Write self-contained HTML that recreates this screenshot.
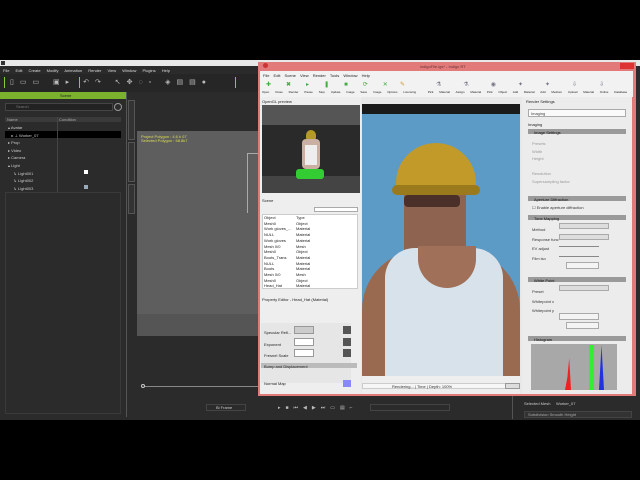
<!DOCTYPE html>
<html><head><style>
*{margin:0;padding:0;box-sizing:border-box}
body{width:640px;height:480px;background:#000;position:relative;overflow:hidden;font-family:"Liberation Sans",sans-serif;font-size:4px;color:#ccc}
div{position:absolute}
.t{white-space:nowrap}
</style></head><body>
<div style="left:0;top:60px;width:640px;height:6px;background:#e8e8e8"></div>
<div style="left:1px;top:61px;width:4px;height:4px;background:#333"></div>
<div style="left:0;top:66px;width:640px;height:354px;background:#2b2b2b"></div>
<div class="t" style="left:3px;top:68px;font-size:4px;color:#ddd;word-spacing:5px">File Edit Create Modify Animation Render View Window Plugins Help</div>
<div style="left:0;top:74px;width:260px;height:18px;background:#262626"></div>
<div style="left:4px;top:77px;width:1px;height:11px;background:#8c3"></div>
<div style="left:79px;top:77px;width:1px;height:11px;background:#8c3"></div>
<div style="left:235px;top:77px;width:1px;height:11px;background:#8c3"></div>
<div class="t" style="left:10px;top:78px;font-size:7px;color:#bbb;letter-spacing:6px">▯▭▭ ▣▸ ↶↷ ↖✥◌▫ ◈▤▤●</div>
<div style="left:0;top:92px;width:126px;height:7px;background:#7ab22e"></div>
<div class="t" style="left:60px;top:93px;color:#222">Scene</div>
<div style="left:5px;top:103px;width:108px;height:8px;background:#222;border:1px solid #444"></div>
<div class="t" style="left:16px;top:104px;color:#777">Search</div>
<div style="left:114px;top:103px;width:8px;height:8px;border:1px solid #999;border-radius:50%"></div>
<div style="left:5px;top:117px;width:116px;height:5px;background:#3a3a3a"></div>
<div class="t" style="left:7px;top:117px;color:#aaa">Name</div>
<div class="t" style="left:59px;top:117px;color:#aaa">Condition</div>
<div style="left:5px;top:131px;width:116px;height:7px;background:#000"></div>
<div style="left:57px;top:117px;width:1px;height:75px;background:#444"></div>
<div class="t" style="left:8px;top:124px;line-height:7.6px;color:#ccc">▴ Avatar<br>&nbsp;&nbsp;&nbsp;▸ ⊥ Worker_07<br>▸ Prop<br>▸ Video<br>▸ Camera<br>▴ Light<br>&nbsp;&nbsp;&nbsp;&nbsp;&nbsp;↳ Light001<br>&nbsp;&nbsp;&nbsp;&nbsp;&nbsp;↳ Light002<br>&nbsp;&nbsp;&nbsp;&nbsp;&nbsp;↳ Light003</div>
<div style="left:84px;top:170px;width:4px;height:4px;background:#fff"></div>
<div style="left:84px;top:185px;width:4px;height:4px;background:#9ab"></div>
<div style="left:5px;top:192px;width:116px;height:222px;border:1px solid #3a3a3a"></div>
<div style="left:126px;top:92px;width:1px;height:325px;background:#555"></div>
<div style="left:128px;top:100px;width:7px;height:40px;border:1px solid #555;background:#333"></div>
<div style="left:128px;top:142px;width:7px;height:40px;border:1px solid #555;background:#333"></div>
<div style="left:128px;top:184px;width:7px;height:30px;border:1px solid #555;background:#333"></div>
<div style="left:137px;top:131px;width:121px;height:205px;background:#5e5e5e"></div>
<div style="left:137px;top:314px;width:121px;height:22px;background:#555"></div>
<div class="t" style="left:141px;top:135px;color:#dd5;line-height:4px">Project Polygon : 4.6 k 07<br>Selected Polygon : 58.8k7</div>
<div style="left:247px;top:153px;width:11px;height:1px;background:#aaa"></div>
<div style="left:247px;top:153px;width:1px;height:60px;background:#aaa"></div>
<div style="left:145px;top:386px;width:113px;height:1px;background:#888"></div>
<div style="left:141px;top:384px;width:4px;height:4px;border:1px solid #ccc;border-radius:50%"></div>
<div style="left:206px;top:404px;width:40px;height:7px;border:1px solid #444"></div>
<div class="t" style="left:216px;top:405px;color:#ccc">Bi Frame</div>
<div class="t" style="left:278px;top:405px;font-size:5px;color:#bbb;letter-spacing:5px">▸■⏮◀▶⏭▭▤⌐</div>
<div style="left:370px;top:404px;width:80px;height:7px;border:1px solid #444"></div>
<div style="left:512px;top:395px;width:1px;height:24px;background:#555"></div>
<div class="t" style="left:524px;top:401px;color:#ccc">Selected Mesh &nbsp;&nbsp;&nbsp; Worker_07</div>
<div style="left:524px;top:411px;width:108px;height:7px;background:#333;border:1px solid #444"></div>
<div class="t" style="left:528px;top:412px;color:#aaa">Subdivision Smooth Height</div>
<div style="left:0;top:420px;width:640px;height:60px;background:#000"></div>
<!-- Indigo window -->
<div style="left:258px;top:62px;width:378px;height:334px;background:#e27a7a"></div>
<div style="left:263px;top:63px;width:5px;height:5px;border-radius:50%;background:#c33"></div>
<div class="t" style="left:420px;top:64px;color:#633">indigoFile.igs* - Indigo RT</div>
<div style="left:620px;top:63px;width:14px;height:6px;background:#d33"></div>
<div style="left:260px;top:71px;width:373px;height:26px;background:#f2f2f2"></div>
<div class="t" style="left:263px;top:73px;color:#222;word-spacing:3px">File Edit Scene View Render Tools Window Help</div>
<div class="t" style="left:266px;top:81px;font-size:6px;color:#4a4;letter-spacing:15px">✚✖▸❚■⟳✕</div>
<div class="t" style="left:400px;top:81px;font-size:6px;color:#c93">✎</div>
<div class="t" style="left:436px;top:81px;font-size:6px;color:#778;letter-spacing:22px">⚗⚗◉✦✦⇩⇩</div>
<div class="t" style="left:262px;top:90px;font-size:3px;color:#222;word-spacing:5px">Open Close Render Pause Stop Update&nbsp;Image Save&nbsp;Image Options Licensing &nbsp;Pick&nbsp;Material Assign&nbsp;Material Pick&nbsp;Object Add&nbsp;Material Add&nbsp;Medium Upload&nbsp;Material Online&nbsp;Database</div>
<div style="left:260px;top:97px;width:101px;height:297px;background:#eee"></div>
<div class="t" style="left:262px;top:99px;color:#222">OpenGL preview</div>
<div style="left:262px;top:105px;width:98px;height:88px;background:#2a2a2a"></div>
<div style="left:262px;top:105px;width:98px;height:20px;background:#555"></div>
<div style="left:262px;top:176px;width:98px;height:17px;background:#444"></div>
<div style="left:306px;top:130px;width:10px;height:9px;border-radius:5px 5px 1px 1px;background:#b59a2a"></div>
<div style="left:302px;top:139px;width:18px;height:30px;background:#c9b0a0;border-radius:4px"></div>
<div style="left:305px;top:145px;width:12px;height:20px;background:#eee"></div>
<div style="left:296px;top:169px;width:28px;height:10px;background:#3c3;border-radius:3px"></div>
<div class="t" style="left:262px;top:198px;color:#222">Scene</div>
<div style="left:314px;top:207px;width:44px;height:5px;background:#fff;border:1px solid #aaa"></div>
<div style="left:262px;top:214px;width:96px;height:75px;background:#fff;border:1px solid #ccc"></div>
<div class="t" style="left:264px;top:215px;color:#222;line-height:5.7px">Object<br>Mesh0<br>Work gloves_...<br>NULL<br>Work gloves<br>Mesh 0/0<br>Mesh0<br>Boots_Trans<br>NULL<br>Boots<br>Mesh 0/0<br>Mesh0<br>Head_Hat</div>
<div class="t" style="left:296px;top:215px;color:#222;line-height:5.7px">Type<br>Object<br>Material<br>Material<br>Material<br>Mesh<br>Object<br>Material<br>Material<br>Material<br>Mesh<br>Object<br>Material</div>
<div class="t" style="left:262px;top:297px;color:#222">Property Editor - Head_Hat (Material)</div>
<div style="left:261px;top:323px;width:90px;height:60px;background:#e6e6e6"></div>
<div style="left:294px;top:326px;width:20px;height:8px;background:#ccc;border:1px solid #999"></div>
<div style="left:294px;top:338px;width:20px;height:8px;background:#fff;border:1px solid #999"></div>
<div style="left:294px;top:349px;width:20px;height:8px;background:#fff;border:1px solid #999"></div>
<div style="left:343px;top:326px;width:8px;height:8px;background:#555"></div>
<div style="left:343px;top:338px;width:8px;height:8px;background:#555"></div>
<div style="left:343px;top:349px;width:8px;height:8px;background:#555"></div>
<div class="t" style="left:264px;top:327px;color:#222;line-height:11.5px">Specular Refl...<br>Exponent<br>Fresnel Scale</div>
<div style="left:261px;top:363px;width:96px;height:5px;background:#bbb"></div>
<div class="t" style="left:264px;top:364px;color:#222">Bump and Displacement</div>
<div class="t" style="left:264px;top:381px;color:#222">Normal Map</div>
<div style="left:343px;top:380px;width:8px;height:7px;background:#88f"></div>
<!-- render view -->
<div style="left:361px;top:97px;width:161px;height:297px;background:#e8e8e8"></div>
<div style="left:362px;top:104px;width:158px;height:10px;background:#1a1a1a"></div>
<div style="left:362px;top:114px;width:158px;height:262px;background:#5d9bc7"></div>
<div style="left:362px;top:250px;width:158px;height:126px;background:#9a6a50;border-radius:60px 60px 0 0"></div>
<div style="left:404px;top:180px;width:62px;height:100px;background:#8e6450;border-radius:10px 10px 30px 30px"></div>
<div style="left:396px;top:143px;width:80px;height:50px;background:#c19a2a;border-radius:40px 40px 6px 6px"></div>
<div style="left:392px;top:185px;width:88px;height:10px;background:#9a7a1c;border-radius:5px"></div>
<div style="left:404px;top:195px;width:56px;height:12px;background:#4a3028;border-radius:4px"></div>
<div style="left:385px;top:248px;width:118px;height:128px;background:#d8e2ea;border-radius:30px 30px 0 0"></div>
<div style="left:418px;top:246px;width:58px;height:42px;background:#a07058;border-radius:0 0 30px 30px"></div>
<div style="left:362px;top:376px;width:158px;height:18px;background:#eee"></div>
<div style="left:362px;top:383px;width:158px;height:6px;background:#f6f6f6;border:1px solid #ccc"></div>
<div class="t" style="left:392px;top:384px;color:#333">Rendering... | Time | Depth: 100%</div>
<div style="left:505px;top:383px;width:15px;height:6px;background:#ddd;border:1px solid #999"></div>
<!-- right settings -->
<div style="left:522px;top:97px;width:110px;height:297px;background:#ececec"></div>
<div class="t" style="left:526px;top:99px;color:#222">Render Settings</div>
<div style="left:528px;top:109px;width:98px;height:8px;background:#fafafa;border:1px solid #aaa"></div>
<div class="t" style="left:531px;top:111px;color:#444">Imaging</div>
<div class="t" style="left:528px;top:122px;color:#222">Imaging</div>
<div style="left:528px;top:129px;width:98px;height:5px;background:#9a9a9a"></div>
<div class="t" style="left:534px;top:130px;color:#111">Image Settings</div>
<div class="t" style="left:532px;top:140px;color:#999;line-height:7.5px">Presets<br>Width<br>Height<br><br>Resolution<br>Supersampling factor</div>
<div style="left:528px;top:196px;width:98px;height:5px;background:#9a9a9a"></div>
<div class="t" style="left:534px;top:197px;color:#111">Aperture Diffraction</div>
<div class="t" style="left:532px;top:205px;color:#333">☐ Enable aperture diffraction</div>
<div style="left:528px;top:215px;width:98px;height:5px;background:#9a9a9a"></div>
<div class="t" style="left:534px;top:216px;color:#111">Tone Mapping</div>
<div class="t" style="left:532px;top:225px;color:#333;line-height:9.5px">Method<br>Response func<br>EV adjust<br>Film iso</div>
<div style="left:559px;top:223px;width:50px;height:6px;background:#ddd;border:1px solid #aaa"></div>
<div style="left:559px;top:234px;width:50px;height:6px;background:#ddd;border:1px solid #aaa"></div>
<div style="left:559px;top:246px;width:40px;height:1px;background:#888"></div>
<div style="left:559px;top:256px;width:40px;height:1px;background:#888"></div>
<div style="left:566px;top:262px;width:33px;height:7px;background:#f4f4f4;border:1px solid #aaa"></div>
<div style="left:528px;top:277px;width:98px;height:5px;background:#9a9a9a"></div>
<div class="t" style="left:534px;top:278px;color:#111">White Point</div>
<div class="t" style="left:532px;top:287px;color:#333;line-height:9.5px">Preset<br>Whitepoint x<br>Whitepoint y</div>
<div style="left:559px;top:285px;width:50px;height:6px;background:#ddd;border:1px solid #aaa"></div>
<div style="left:559px;top:313px;width:40px;height:7px;background:#f4f4f4;border:1px solid #aaa"></div>
<div style="left:566px;top:322px;width:33px;height:7px;background:#f4f4f4;border:1px solid #aaa"></div>
<div style="left:528px;top:336px;width:98px;height:5px;background:#9a9a9a"></div>
<div class="t" style="left:534px;top:337px;color:#111">Histogram</div>
<div style="left:531px;top:344px;width:86px;height:46px;background:#a8a8a8"></div>
<div style="left:565px;top:358px;width:6px;height:32px;background:#e22;clip-path:polygon(0 100%,40% 60%,70% 0,100% 100%)"></div>
<div style="left:589px;top:345px;width:5px;height:45px;background:#3e3"></div>
<div style="left:599px;top:345px;width:5px;height:45px;background:#23d;clip-path:polygon(0 100%,50% 0,100% 100%)"></div>
</body></html>
